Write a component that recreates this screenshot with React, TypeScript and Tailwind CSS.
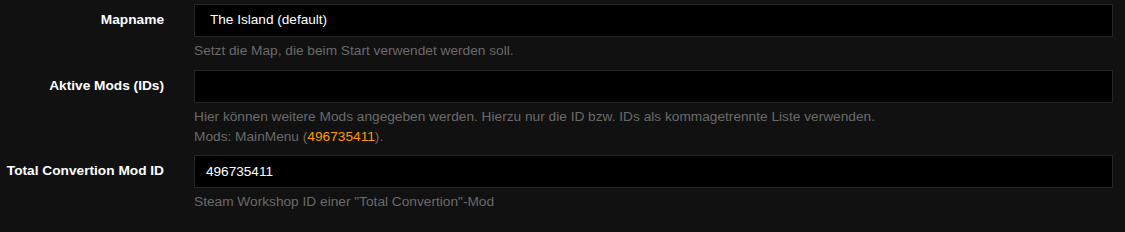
import type { ReactNode } from 'react'

// Server-Einstellungen (Ausschnitt)

function Row({ label, children, help, mb }: { label: string; children: ReactNode; help: ReactNode; mb?: string }) {
  return (
    <div className={`flex ${mb ?? ''}`}>
      <label className="flex h-[33px] w-[164px] shrink-0 items-center justify-end text-right text-[13.7px] font-bold text-white">
        {label}
      </label>
      <div className="ml-[30px] min-w-0 flex-1">
        {children}
        <div className="mt-[4px] text-[13.7px] leading-[20px] text-[#6a6a6a]">{help}</div>
      </div>
    </div>
  )
}

const inputCls =
  'block h-[33px] w-full border border-[#262626] bg-black text-[13.6px] text-white outline-none'

export default function App() {
  return (
    <main
      className="min-h-[232px] w-full bg-[#111111] pr-[12px] pt-[4px]"
      style={{ fontFamily: '"Liberation Sans", Arial, sans-serif' }}
    >
      <Row label="Mapname" help="Setzt die Map, die beim Start verwendet werden soll." mb="mb-[9px]">
        <select className={`${inputCls} appearance-none pl-[15px]`} defaultValue="TheIsland">
          <option value="TheIsland">The Island (default)</option>
        </select>
      </Row>
      <Row
        label="Aktive Mods (IDs)"
        mb="mb-[8px]"
        help={
          <>
            Hier können weitere Mods angegeben werden. Hierzu nur die ID bzw. IDs als kommagetrennte Liste verwenden.
            <br />
            Mods: MainMenu (<span className="text-[#ff9900]">496735411</span>).
          </>
        }
      >
        <input className={`${inputCls} pl-[11px]`} defaultValue="" readOnly />
      </Row>
      <Row label="Total Convertion Mod ID" help={'Steam Workshop ID einer "Total Convertion"-Mod'}>
        <input className={`${inputCls} pl-[11px]`} defaultValue="496735411" readOnly />
      </Row>
    </main>
  )
}
